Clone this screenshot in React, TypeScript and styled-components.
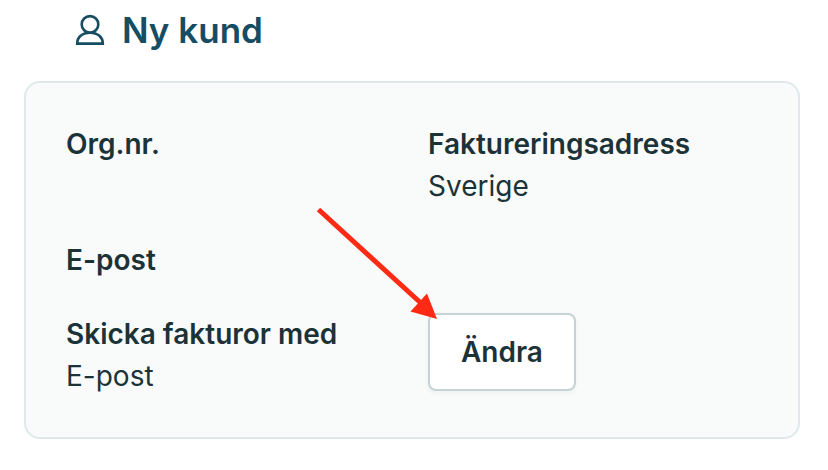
import React from "react";
import styled, { createGlobalStyle } from "styled-components";

const GlobalStyle = createGlobalStyle`
  *, *::before, *::after { box-sizing: border-box; }
  body { margin: 0; background: #ffffff; }
  body, button { font-family: Inter, "Liberation Sans", sans-serif; color: #1b3338; }
`;

const Page = styled.main`
  padding: 8px 28px 32px 24px;
`;

const Header = styled.header`
  display: flex;
  align-items: center;
  gap: 16px;
  padding-left: 50px;
  margin-bottom: 29px;
  color: #174d63;
`;

const Title = styled.h1`
  margin: 0;
  font-size: 35px;
  line-height: 44px;
  font-weight: 600;
`;

const Card = styled.section`
  position: relative;
  display: grid;
  grid-template-columns: 1fr 1fr;
  column-gap: 32px;
  padding: 40px;
  border: 2px solid #dfe9ea;
  border-radius: 16px;
  background: #f9fbfa;
`;

const Field = styled.dl<{ $space?: number }>`
  margin: 0 0 ${(p) => p.$space ?? 0}px;
`;

const Label = styled.dt`
  font-size: 28px;
  line-height: 42px;
  font-weight: 600;
`;

const Value = styled.dd`
  margin: 0;
  min-height: 42px;
  font-size: 28px;
  line-height: 42px;
  font-weight: 400;
`;

const ChangeButton = styled.button`
  justify-self: start;
  align-self: start;
  padding: 16px 31px;
  border: 2px solid #c5d3d6;
  border-radius: 8px;
  background: #ffffff;
  font-size: 28px;
  line-height: 42px;
  font-weight: 600;
  box-shadow: 0 2px 4px rgba(27, 51, 56, 0.05);
`;

const Arrow = styled.svg`
  position: absolute;
  left: 290px;
  top: 124px;
  pointer-events: none;
`;

export default function App() {
  return (
    <>
      <GlobalStyle />
      <Page>
        <Header>
          <svg width="32" height="34" viewBox="0 0 32 34" fill="none" stroke="currentColor" strokeWidth="2.6" aria-hidden="true">
            <circle cx="16" cy="11.4" r="8.3" />
            <path d="M3.2 30.6C3.2 24.4 8 19.7 16 19.7S28.8 24.4 28.8 30.6Z" />
          </svg>
          <Title>Ny kund</Title>
        </Header>
        <Card>
          <Field $space={32}>
            <Label>Org.nr.</Label>
            <Value />
          </Field>
          <Field $space={32}>
            <Label>Faktureringsadress</Label>
            <Value>Sverige</Value>
          </Field>
          <Field $space={32}>
            <Label>E-post</Label>
          </Field>
          <span />
          <Field>
            <Label>Skicka fakturor med</Label>
            <Value>E-post</Value>
          </Field>
          <ChangeButton type="button">Ändra</ChangeButton>
          <Arrow width="126" height="116" viewBox="0 0 126 116" aria-hidden="true">
            <path d="M2.5 2.5L107 98" stroke="#ff2a14" strokeWidth="5" />
            <path d="M121 112L94.500 104.500L111 86.500Z" fill="#ff2a14" />
          </Arrow>
        </Card>
      </Page>
    </>
  );
}
